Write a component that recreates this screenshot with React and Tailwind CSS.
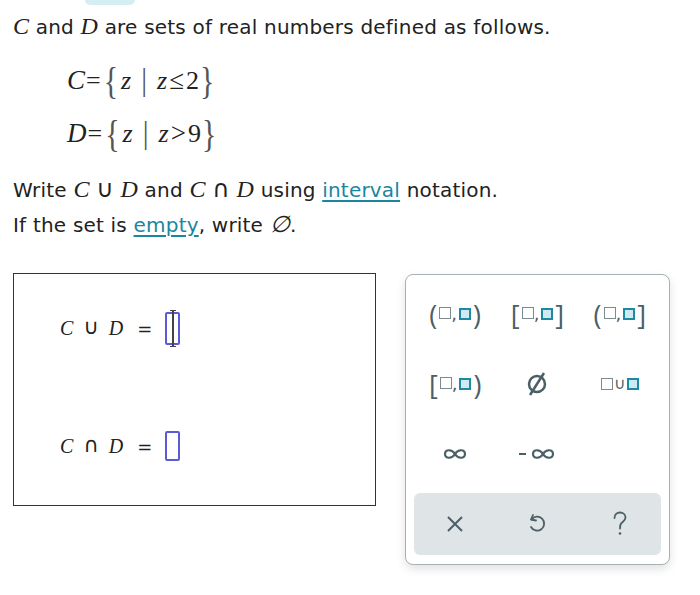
import React from "react";

const sans = { fontFamily: '"DejaVu Sans", Verdana, sans-serif' };
const serif = { fontFamily: '"Liberation Serif", "Times New Roman", serif' };
const open = { fontFamily: '"Open Sans", sans-serif' };

function V({ children, className = "" }) {
  return (
    <span className={"italic " + className} style={serif}>
      {children}
    </span>
  );
}

function Box({ filled }) {
  return filled ? (
    <span className="inline-block w-[12px] h-[12px] border-2 border-[#1d8aa3] bg-[#cfe9f0]" />
  ) : (
    <span className="inline-block w-[12px] h-[12px] border-[1.5px] border-[#7d8b90]" />
  );
}

function Interval({ l, r }) {
  return (
    <span className="flex items-center text-[#4b5f66]" style={sans}>
      <span className="text-[27px] leading-none font-normal inline-block" style={open}>{l}</span>
      <span className="ml-[2px]"><Box /></span>
      <span className="text-[18px] leading-none mr-[2px] self-end mb-[5px]">,</span>
      <Box filled />
      <span className="text-[27px] leading-none font-normal inline-block ml-[2px]" style={open}>{r}</span>
    </span>
  );
}

function Key({ children }) {
  return <div className="flex items-center justify-center h-[70px]">{children}</div>;
}

function Cursor() {
  return (
    <span className="relative inline-block w-[15px] h-[33px] border-2 border-[#5b5bd6] rounded-[2px]">
      <span className="absolute left-[5px] top-[-4px] w-[1.5px] h-[37px] bg-[#444]" />
      <span className="absolute left-[3px] top-[-4px] w-[6px] h-[1px] bg-[#444]" />
      <span className="absolute left-[3px] bottom-[-4px] w-[6px] h-[1px] bg-[#444]" />
    </span>
  );
}

function Inf() {
  return (
    <svg width="26" height="14" viewBox="0 0 26 14">
      <path
        d="M13 7 C10.5 2.5 3 1.5 3 7 C3 12.5 10.5 11.5 13 7 C15.5 2.5 23 1.5 23 7 C23 12.5 15.5 11.5 13 7 Z"
        fill="none"
        stroke="#4b5f66"
        strokeWidth="2.2"
      />
    </svg>
  );
}

function MathLine({ name, rel, num }) {
  return (
    <div className="flex items-center h-[32px]" style={serif}>
      <span className="italic text-[27px]">{name}</span>
      <span className="ml-[1px] mr-[3px] text-[26px]">=</span>
      <span className="text-[30px] text-[#555] scale-y-125 inline-block">{"{"}</span>
      <span className="italic ml-[3px] text-[26px]">z</span>
      <span className="mx-[10px] text-[#555] text-[29px] scale-y-110 inline-block">|</span>
      <span className="italic text-[26px]">z</span>
      <span className="mx-[2px] text-[27px]">{rel}</span>
      <span className="text-[26px]">{num}</span>
      <span className="text-[30px] text-[#555] scale-y-125 inline-block ml-[1px]">{"}"}</span>
    </div>
  );
}

export default function App() {
  return (
    <div className="w-[700px] h-[595px] bg-white text-[#222] relative overflow-hidden" style={sans}>
      <div className="ml-[85px] w-[50px] h-[5px] rounded-b-[8px] bg-[#d5eef3]" />
      <div className="pl-[13px] pt-[8px]">
        <p className="text-[20px] leading-[26px] tracking-[0.2px]">
          <V className="text-[24px]">C</V> and <V className="text-[24px]">D</V> are sets of real numbers defined as follows.
        </p>

        <div className="ml-[54px] mt-[24px] flex flex-col gap-[21px]">
          <MathLine name="C" rel="≤" num="2" />
          <MathLine name="D" rel=">" num="9" />
        </div>

        <p className="text-[20px] leading-[26px] mt-[27px] tracking-[0.2px]">
          Write <V className="text-[24px]">C</V> <span className="text-[24px] leading-none">∪</span> <V className="text-[24px]">D</V> and{" "}
          <V className="text-[24px]">C</V> <span className="text-[24px] leading-none">∩</span> <V className="text-[24px]">D</V> using{" "}
          <span className="text-[#1a86a0] underline underline-offset-[3px]">interval</span> notation.
        </p>
        <p className="text-[20px] leading-[26px] mt-[9px] tracking-[0.2px]">
          If the set is <span className="text-[#1a86a0] underline underline-offset-[3px]">empty</span>, write{" "}
          <V className="text-[23px]">∅</V>.
        </p>
      </div>

      <div className="flex items-start mt-[35px] ml-[13px]">
        <div className="w-[363px] h-[233px] border-[1.5px] border-[#333] flex flex-col pl-[46px] pt-[35px] gap-[80px]">
          <div className="flex items-center text-[17px] h-[38px]">
            <V className="text-[20px]">C</V>
            <span className="mx-[10px] text-[21px]">∪</span>
            <V className="text-[20px]">D</V>
            <span className="ml-[14px] mr-[13px] text-[18px]">=</span>
            <Cursor />
          </div>
          <div className="flex items-center text-[17px] h-[38px]">
            <V className="text-[20px]">C</V>
            <span className="mx-[10px] text-[21px]">∩</span>
            <V className="text-[20px]">D</V>
            <span className="ml-[14px] mr-[13px] text-[18px]">=</span>
            <span className="inline-block w-[15px] h-[30px] border-2 border-[#5b5bd6] rounded-[2px]" />
          </div>
        </div>

        <div className="ml-[29px] mt-[1px] w-[265px] h-[291px] border-[1.5px] border-[#a7b0b4] rounded-[8px] bg-white shadow-[0_4px_10px_rgba(0,0,0,0.12)] px-[8px] pt-[4px] pb-[8px] flex flex-col">
          <div className="grid grid-cols-3">
            <Key><Interval l="(" r=")" /></Key>
            <Key><Interval l="[" r="]" /></Key>
            <Key><Interval l="(" r="]" /></Key>
            <Key><Interval l="[" r=")" /></Key>
            <Key>
              <svg width="24" height="26" viewBox="0 0 24 26">
                <circle cx="12" cy="13" r="8" fill="none" stroke="#4b5f66" strokeWidth="2.5" />
                <line x1="19" y1="2" x2="5" y2="24" stroke="#4b5f66" strokeWidth="2.5" />
              </svg>
            </Key>
            <Key>
              <span className="flex items-center text-[#4b5f66]">
                <Box />
                <span className="text-[16px] mx-[1px] leading-none">∪</span>
                <Box filled />
              </span>
            </Key>
            <Key>
              <Inf />
            </Key>
            <Key>
              <span className="flex items-center gap-[4px]">
                <span className="inline-block w-[7px] h-[2px] bg-[#4b5f66]" />
                <Inf />
              </span>
            </Key>
            <div />
          </div>
          <div className="mt-[4px] h-[62px] rounded-[6px] bg-[#dfe4e6] grid grid-cols-3 items-center">
            <div className="flex justify-center">
              <svg width="18" height="16" viewBox="0 0 18 16">
                <path d="M2 1 L16 15 M16 1 L2 15" stroke="#4b5f66" strokeWidth="2" fill="none" />
              </svg>
            </div>
            <div className="flex justify-center">
              <svg width="18" height="22" viewBox="0 0 18 22">
                <path d="M5 2 L3 6.5 L8 7.5" stroke="#4b5f66" strokeWidth="1.8" fill="none" strokeLinecap="round" strokeLinejoin="round" />
                <path d="M3.5 6.5 A7 7 0 1 1 3 14" stroke="#4b5f66" strokeWidth="1.8" fill="none" strokeLinecap="round" />
              </svg>
            </div>
            <div className="flex justify-center">
              <svg width="16" height="26" viewBox="0 0 16 26">
                <path d="M2.5 7 C2.5 3.5 5 1.5 8 1.5 C11 1.5 13.5 3.5 13.5 6.5 C13.5 9.5 11 10.5 9.5 12 C8.3 13.2 8 14.5 8 17.5" stroke="#4b5f66" strokeWidth="1.8" fill="none" strokeLinecap="round" />
                <circle cx="8" cy="22.5" r="1.3" fill="#4b5f66" />
              </svg>
            </div>
          </div>
        </div>
      </div>
    </div>
  );
}
